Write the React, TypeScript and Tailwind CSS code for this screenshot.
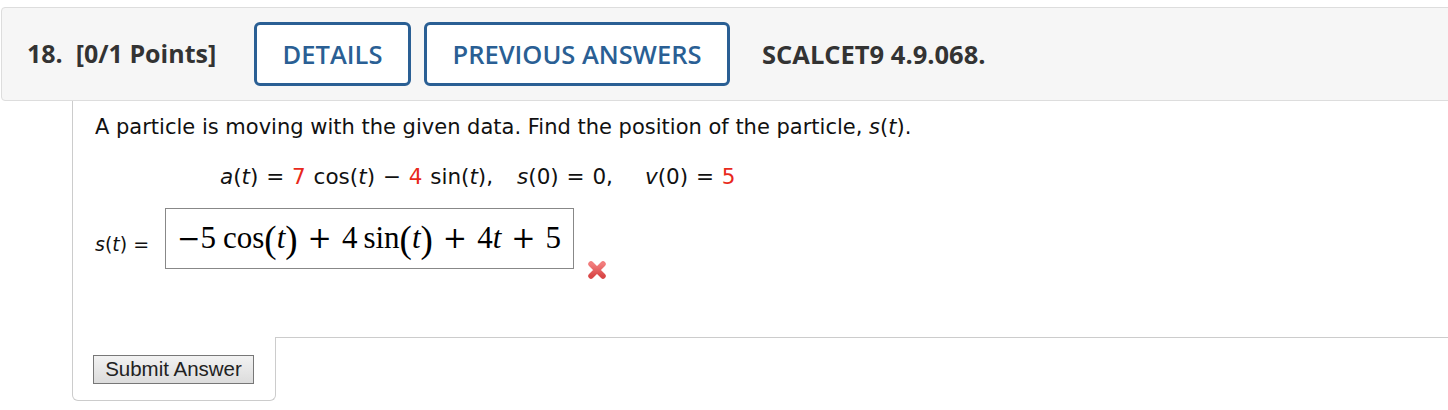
import React from 'react'

const sans = { fontFamily: '"Open Sans", "Noto Sans", sans-serif' }
const verdana = { fontFamily: '"DejaVu Sans", Verdana, sans-serif' }
const serif = { fontFamily: '"Liberation Serif", "DejaVu Serif", serif' }
const opFont = { fontFamily: '"DejaVu Serif", serif' }

const RedX = () => (
  <svg width="22" height="22" viewBox="0 0 22 22">
    <defs>
      <linearGradient id="xg" x1="0" y1="0" x2="0" y2="1">
        <stop offset="0" stopColor="#f27d7d" />
        <stop offset="1" stopColor="#d94848" />
      </linearGradient>
    </defs>
    <path d="M5 5 L17 17 M17 5 L5 17" stroke="url(#xg)" strokeWidth="5.5" strokeLinecap="round" />
  </svg>
)

const Paren = ({ c }: { c: string }) => (
  <span className="text-[37px] leading-none relative top-[1px]">{c}</span>
)

const Op = ({ c }: { c: string }) => (
  <span className="mx-[10px] text-[29px]" style={opFont}>{c}</span>
)

const Red = ({ children }: { children: React.ReactNode }) => (
  <span className="text-[#e8291c]">{children}</span>
)

const App = () => {
  return (
    <div className="w-[1448px] h-[410px] overflow-hidden bg-white text-[#333]" style={sans}>
      <div className="pt-[7px] pl-[1px]">
        <div className="w-[1480px] h-[94px] bg-[#f6f6f6] border border-[#dddddd] rounded-[4px] flex items-center pl-[25px]">
          <div className="w-[227px] text-[25px] font-bold text-[#333] whitespace-pre">18.  [0/1 Points]</div>
          <button className="w-[157px] h-[64px] border-[3px] border-[#2a5f94] rounded-[6px] text-[25.5px] font-semibold text-[#2a5f94] bg-white">
            DETAILS
          </button>
          <button className="ml-[13px] w-[306px] h-[64px] border-[3px] border-[#2a5f94] rounded-[6px] text-[25.5px] font-semibold text-[#2a5f94] bg-white">
            PREVIOUS ANSWERS
          </button>
          <div className="ml-[32px] text-[25.5px] font-bold text-[#333]">SCALCET9 4.9.068.</div>
        </div>
      </div>

      <div className="ml-[72px] h-[236px] border-l border-[#cccccc] pl-[22px] pt-[13px] text-[#111]" style={verdana}>
        <div className="text-[21px] leading-[26px]">
          A particle is moving with the given data. Find the position of the particle, <i>s</i>(<i>t</i>).
        </div>
        <div className="text-[21.5px] leading-[26px] mt-[24px] pl-[125px] whitespace-pre [word-spacing:1px]">
          <i>a</i>(<i>t</i>) = <Red>7</Red> cos(<i>t</i>) − <Red>4</Red> sin(<i>t</i>),
          <span className="ml-[24px]"><i>s</i>(0) = 0,</span>
          <span className="ml-[32px]"><i>v</i>(0) = <Red>5</Red></span>
        </div>
        <div className="flex items-start mt-[18px]">
          <div className="self-center w-[70px] text-[19px]"><i>s</i>(<i>t</i>) =</div>
          <div
            className="w-[409px] h-[61px] border border-[#888] flex items-center pl-[11px] text-[31px] text-black whitespace-pre"
            style={serif}
          >
            <span className="text-[28px]" style={opFont}>−</span>5<span className="ml-[7px]">cos</span><Paren c="(" /><i>t</i><Paren c=")" /><Op c="+" />4<span className="ml-[6px]">sin</span><Paren c="(" /><i>t</i><Paren c=")" /><Op c="+" />4<i>t</i><Op c="+" />5
          </div>
          <div className="ml-[12px] mt-[51px]"><RedX /></div>
        </div>
      </div>

      <div className="flex ml-[72px] h-[64px]">
        <div className="w-[204px] border-l border-r border-b border-[#cccccc] rounded-b-[6px] pl-[20px] pt-[18px]">
          <button
            className="w-[161px] h-[29px] border border-[#777] bg-gradient-to-b from-[#f2f2f2] to-[#dcdcdc] text-[20.5px] text-[#222] leading-none"
            style={{ fontFamily: '"Liberation Sans", Arial, sans-serif' }}
          >
            Submit Answer
          </button>
        </div>
        <div className="flex-1 border-t border-[#cccccc]"></div>
      </div>
    </div>
  )
}

export default App
